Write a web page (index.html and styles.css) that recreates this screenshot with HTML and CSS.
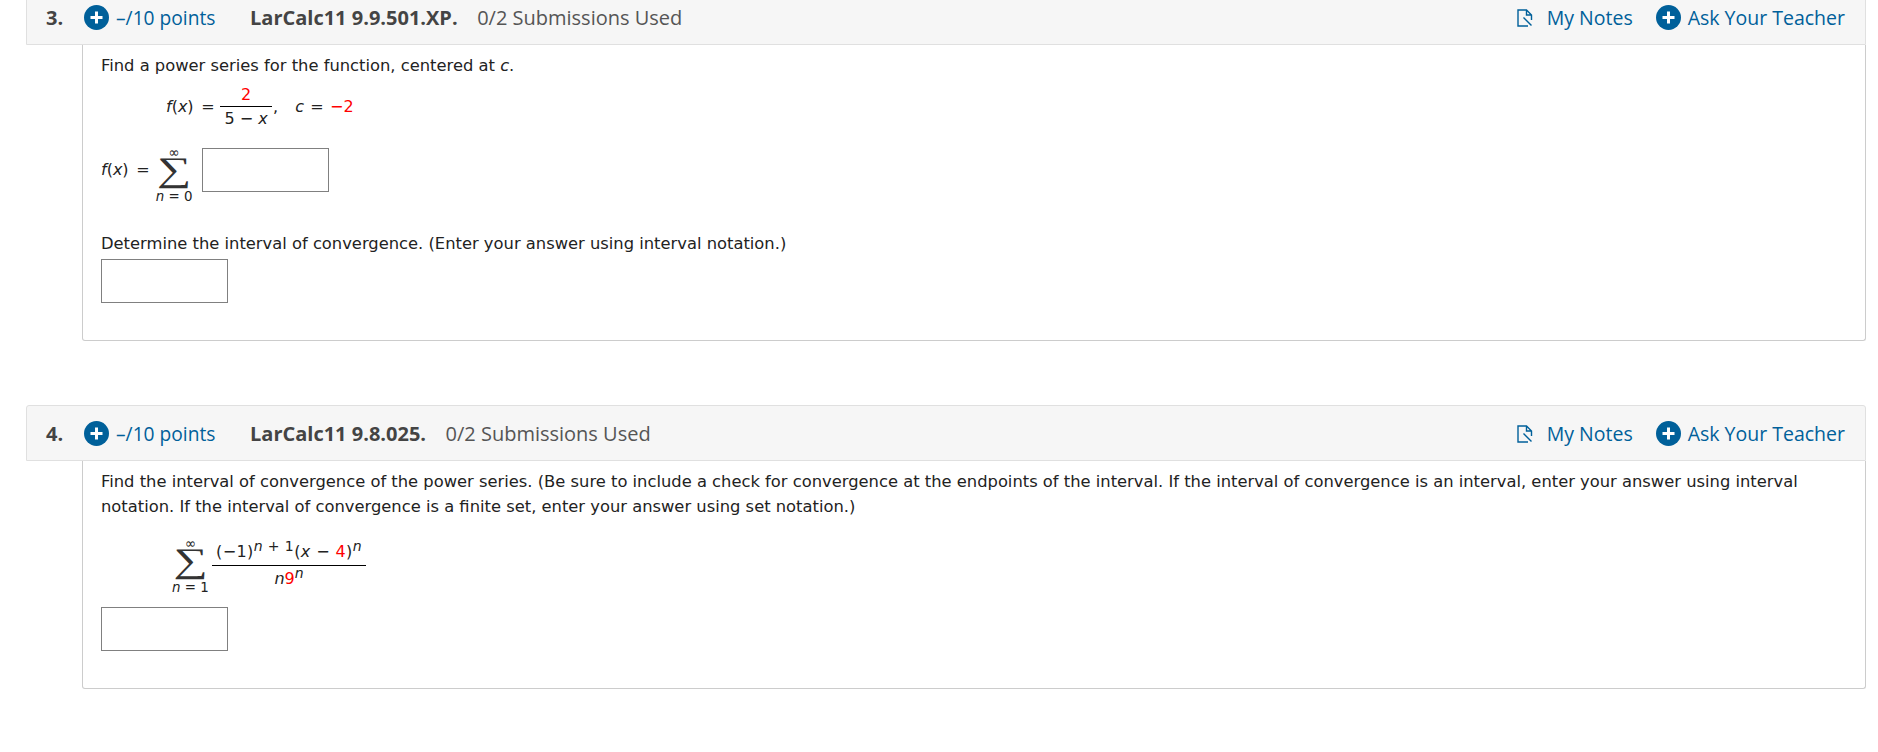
FILE: index.html
```html
<!DOCTYPE html>
<html lang="en">
<head>
<meta charset="utf-8">
<title>Questions</title>
<link rel="stylesheet" href="styles.css">
</head>
<body>
<main class="page">
  <section class="question q3">
    <header class="qhead">
      <span class="qnum">3.</span>
      <svg class="plus" viewBox="0 0 25 25"><circle cx="12.5" cy="12.5" r="12.5"/><path d="M12.5 6.5v12M6.5 12.5h12"/></svg>
      <span class="points">–/10 points</span>
      <span class="qid">LarCalc11 9.9.501.XP.</span>
      <span class="subs">0/2 Submissions Used</span>
      <a class="notes"><svg class="noteicon" viewBox="0 0 16 18"><path d="M14.5 11V6l-5-5H1v16h10M9.5 1v5h5M6.5 8.5l8 8"/></svg><span>My Notes</span></a>
      <a class="ask"><svg class="plus" viewBox="0 0 25 25"><circle cx="12.5" cy="12.5" r="12.5"/><path d="M12.5 6.5v12M6.5 12.5h12"/></svg><span>Ask Your Teacher</span></a>
    </header>
    <div class="body">
      <p class="txt">Find a power series for the function, centered at <i>c</i>.</p>
      <div class="math eq1">
        <span class="lhs1"><i>f</i>(<i>x</i>) =</span>
        <span class="frac f1"><span class="num red">2</span><span class="den">5 − <i>x</i></span></span>
        <span class="after">,</span>
        <span class="cval"><i>c</i> = <span class="red">−2</span></span>
      </div>
      <div class="math eq2">
        <span class="lhs"><i>f</i>(<i>x</i>) =</span>
        <span class="sum"><span class="lim">∞</span><span class="sig">∑</span><span class="lim"><i>n</i> = 0</span></span>
        <span class="box"></span>
      </div>
      <p class="txt det">Determine the interval of convergence. (Enter your answer using interval notation.)</p>
      <div class="box"></div>
    </div>
  </section>
  <section class="question q4">
    <header class="qhead">
      <span class="qnum">4.</span>
      <svg class="plus" viewBox="0 0 25 25"><circle cx="12.5" cy="12.5" r="12.5"/><path d="M12.5 6.5v12M6.5 12.5h12"/></svg>
      <span class="points">–/10 points</span>
      <span class="qid">LarCalc11 9.8.025.</span>
      <span class="subs">0/2 Submissions Used</span>
      <a class="notes"><svg class="noteicon" viewBox="0 0 16 18"><path d="M14.5 11V6l-5-5H1v16h10M9.5 1v5h5M6.5 8.5l8 8"/></svg><span>My Notes</span></a>
      <a class="ask"><svg class="plus" viewBox="0 0 25 25"><circle cx="12.5" cy="12.5" r="12.5"/><path d="M12.5 6.5v12M6.5 12.5h12"/></svg><span>Ask Your Teacher</span></a>
    </header>
    <div class="body">
      <p class="txt">Find the interval of convergence of the power series. (Be sure to include a check for convergence at the endpoints of the interval. If the interval of convergence is an interval, enter your answer using interval notation. If the interval of convergence is a finite set, enter your answer using set notation.)</p>
      <div class="math eq3">
        <span class="sum"><span class="lim">∞</span><span class="sig">∑</span><span class="lim"><i>n</i> = 1</span></span>
        <span class="frac f2"><span class="num">(−1)<sup><i>n</i> + 1</sup>(<i>x</i> − <span class="red">4</span>)<sup><i>n</i></sup></span><span class="den"><i>n</i><span class="red">9</span><sup><i>n</i></sup></span></span>
      </div>
      <div class="box"></div>
    </div>
  </section>
</main>
</body>
</html>
```
FILE: styles.css
```css
html, body { margin: 0; padding: 0; background: #fff; height: 752px; overflow: hidden; }
.page { margin: -11px 12px 0 26px; }
.question { margin-bottom: 64px; }
.qhead {
  display: flex; align-items: center; height: 56px; box-sizing: border-box;
  background: #f6f6f6; border: 1px solid #e0e0e0; border-radius: 3px 3px 0 0;
  padding: 1px 20px 0 19px;
  font: 20px/24px "Open Sans", "Noto Sans", sans-serif; color: #555;
}
.qnum { font-weight: 700; color: #444; width: 38px; }
.plus { width: 25px; height: 25px; flex: none; }
.plus circle { fill: #00609a; }
.plus path { stroke: #fff; stroke-width: 3; fill: none; }
.points { color: #00609a; font-size: 19.2px; margin-left: 7px; width: 134px; }
.qid { font-weight: 700; color: #444; margin-right: 19.5px; }
.subs { color: #555; }
.notes, .ask { display: flex; align-items: center; color: #00609a; font-size: 19.5px; }
.notes { margin-left: auto; margin-right: 23px; }
.noteicon { width: 16px; height: 18px; margin-right: 14px; fill: none; stroke: #00609a; stroke-width: 1.4; }
.ask .plus { margin-right: 7px; }
.body {
  margin-left: 56px; padding: 8px 18px 37px; box-sizing: border-box;
  border: 1px solid #ccc; border-top: 0; border-radius: 0 0 3px 3px;
  font: 16.33px/25px "DejaVu Sans", Verdana, sans-serif; color: #222;
}
.txt { margin: 0; }
.red { color: #f00; }
.box { display: block; width: 127px; height: 44px; box-sizing: border-box; border: 1px solid #808080; background: #fff; flex: none; }
.math { display: flex; align-items: center; font-size: 16px; line-height: 20px; }
.eq1 { margin: 6px 0 0 65px; height: 46px; }
.lhs1, .lhs { word-spacing: 2.5px; }
.cval { word-spacing: 1.2px; }
.frac { display: inline-flex; flex-direction: column; align-items: center; }
.frac .num { border-bottom: 1px solid #000; padding: 0 1px 1px; align-self: stretch; text-align: center; }
.frac .den { padding-top: 2px; }
.f1 { width: 52px; margin-left: 5.5px; }
.after { margin-left: 1px; margin-right: 17px; }
.eq2 { margin-top: 6px; height: 68px; }
.lhs { margin-right: 6px; }
.sum { display: inline-flex; flex-direction: column; align-items: center; line-height: 14px; width: 37px; flex: none; }
.eq2 .sum { margin-top: 10px; }
.eq3 .sum { margin-top: 2px; }
.lim { font-size: 13.4px; white-space: nowrap; }
.sig { font: 48px/28px "Liberation Serif", serif; transform: translateY(-5px) scaleY(.72); margin: 0 0 2px; color: #333; }
.eq2 .box { margin-left: 9.5px; }
.det { margin-top: 27px; }
.det + .box { margin-top: 3px; }
.eq3 { margin: 14px 0 0 71px; height: 64px; }
.f2 { width: 154px; margin-left: 3px; }
.f2 .num { padding-bottom: 3px; white-space: nowrap; letter-spacing: .4px; }
.f2 .den { padding-top: 3px; }
sup { font-size: 14px; line-height: 0; vertical-align: 6px; }
.q4 .box { margin-top: 10px; }
```
